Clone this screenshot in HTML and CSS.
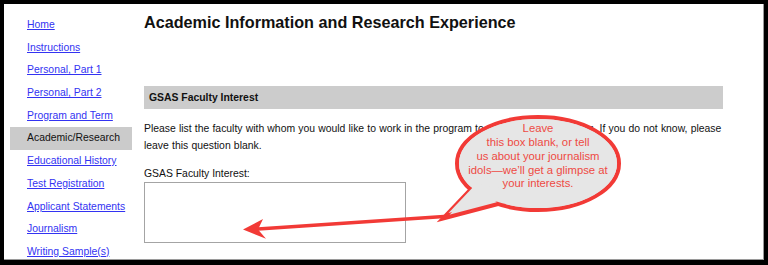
FILE: index.html
```html
<!DOCTYPE html>
<html>
<head>
<meta charset="utf-8">
<link rel="stylesheet" href="styles.css">
</head>
<body>
<div class="frame">
  <nav class="sidebar">
    <a class="nav-item" href="#">Home</a>
    <a class="nav-item" href="#">Instructions</a>
    <a class="nav-item" href="#">Personal, Part 1</a>
    <a class="nav-item" href="#">Personal, Part 2</a>
    <a class="nav-item" href="#">Program and Term</a>
    <span class="nav-item active">Academic/Research</span>
    <a class="nav-item" href="#">Educational History</a>
    <a class="nav-item" href="#">Test Registration</a>
    <a class="nav-item" href="#">Applicant Statements</a>
    <a class="nav-item" href="#">Journalism</a>
    <a class="nav-item" href="#">Writing Sample(s)</a>
  </nav>
  <main class="content">
    <h1 class="title">Academic Information and Research Experience</h1>
    <div class="section-bar">GSAS Faculty Interest</div>
    <p class="intro">Please list the faculty with whom you would like to work in the program to which you are applying. If you do not know, please leave this question blank.</p>
    <label class="field-label" for="fi">GSAS Faculty Interest:</label>
    <textarea id="fi" class="field-box"></textarea>
  </main>

  <svg class="annotation" width="768" height="265" viewBox="0 0 768 265">
    <line x1="444" y1="216.5" x2="258" y2="229" stroke="#f23a36" stroke-width="3.6" stroke-linecap="round"/>
    <polygon points="243,229.6 263,219 258,229.5 266,238.8" fill="#f23a36"/>
    <ellipse cx="538" cy="163.5" rx="81" ry="46.5" fill="#e6e6e6" stroke="#f23a36" stroke-width="4"/>
    <polygon points="474,186 443,218.5 502,203" fill="#e6e6e6" stroke="#f23a36" stroke-width="4" stroke-linejoin="miter"/>
    <ellipse cx="538" cy="163.5" rx="79" ry="44.5" fill="#e6e6e6"/>
    <polygon points="476,184 448.5,213 500,200.5 510,190" fill="#e6e6e6"/>
  </svg>
  <div class="bubble-text">Leave<br>this box blank, or tell<br>us about your journalism<br>idols—we’ll get a glimpse at<br>your interests.</div>
</div>
</body>
</html>
```
FILE: styles.css
```css
html, body {
  margin: 0;
  padding: 0;
}
body {
  background: #000;
  width: 768px;
  height: 265px;
  overflow: hidden;
  font-family: "Liberation Sans", Arial, Helvetica, sans-serif;
  font-size: 10.4px;
  color: #111;
}
.frame {
  position: relative;
  margin: 4px 0 0 4px;
  width: 759px;
  height: 255px;
  background: #fff;
  border-right: 1px solid #9a9a9a;
  border-bottom: 1px solid #9a9a9a;
  overflow: hidden;
  display: flex;
  align-items: flex-start;
}
.sidebar {
  flex: none;
  width: 122px;
  margin-left: 6px;
  padding-top: 10px;
  display: flex;
  flex-direction: column;
}
.nav-item {
  display: block;
  height: 22.7px;
  line-height: 22.7px;
  padding-left: 17px;
  color: #3333f2;
  text-decoration: underline;
  white-space: nowrap;
}
.nav-item.active {
  background: #cbcbcb;
  color: #111;
  text-decoration: none;
}
.content {
  flex: none;
  width: 579px;
  margin-left: 12px;
  padding-top: 8px;
}
.title {
  margin: 0;
  font-size: 16.2px;
  line-height: 20px;
  font-weight: bold;
  color: #111;
}
.section-bar {
  margin-top: 54px;
  height: 23px;
  line-height: 23px;
  padding-left: 5px;
  background: #cccccc;
  font-weight: bold;
}
.intro {
  margin: 10.7px 0 0;
  line-height: 17.5px;
  word-spacing: 0.3px;
}
.field-label {
  display: block;
  margin-top: 10.3px;
  line-height: 17.5px;
}
.field-box {
  display: block;
  box-sizing: border-box;
  width: 262px;
  height: 61px;
  margin: 0;
  border: 1px solid #a4a4a4;
  resize: none;
  background: #fff;
}
.annotation {
  position: absolute;
  left: -4px;
  top: -4px;
}
.bubble-text {
  position: absolute;
  left: 434px;
  top: 118.4px;
  width: 200px;
  text-align: center;
  white-space: nowrap;
  font-size: 11.3px;
  line-height: 13.7px;
  color: #ee4a44;
}
```
